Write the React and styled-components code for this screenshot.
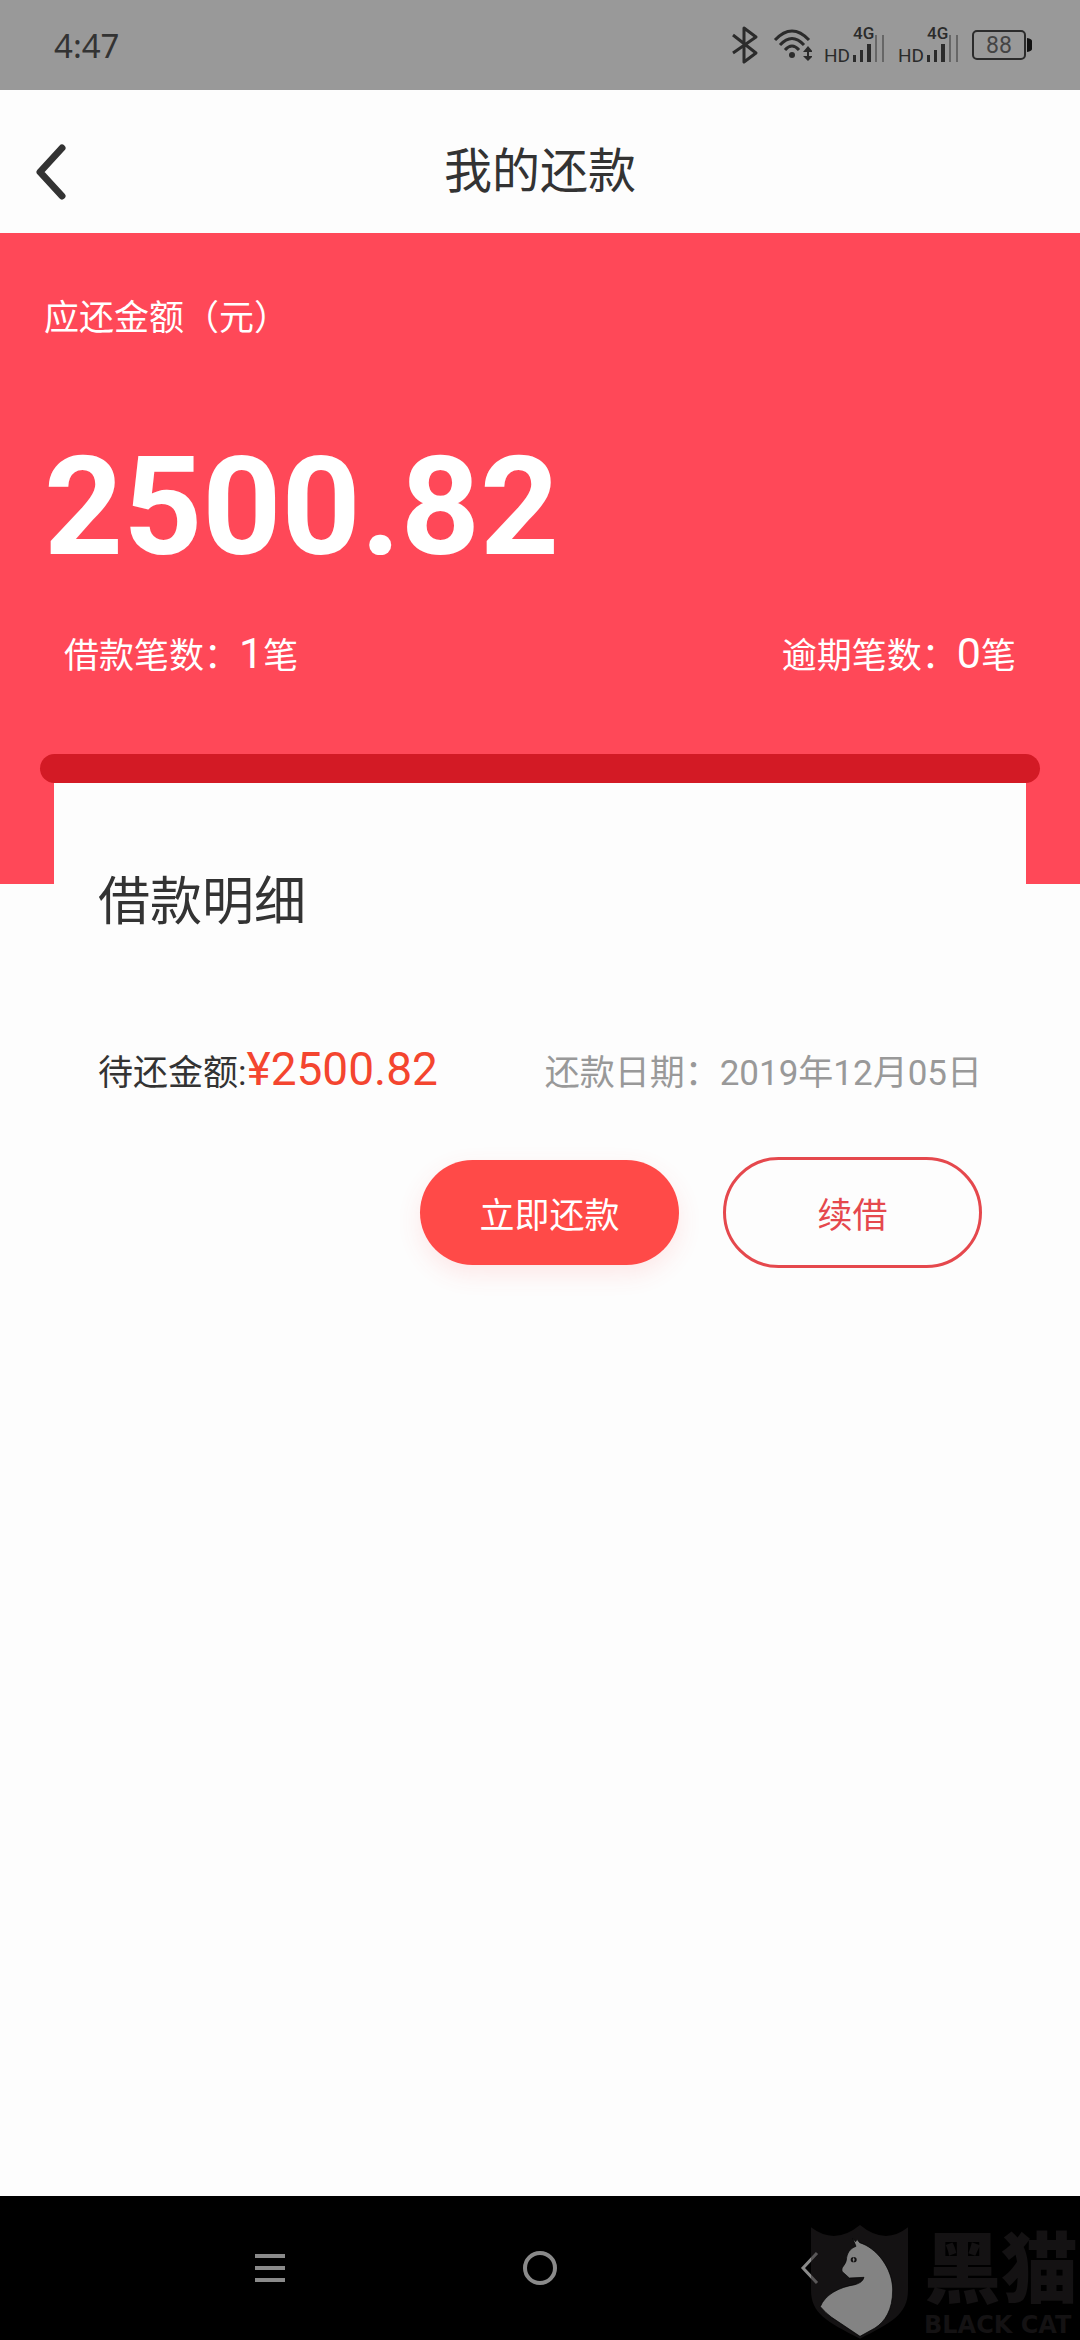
import React from "react";
import styled, { createGlobalStyle } from "styled-components";

const GlobalStyle = createGlobalStyle`
  * {
    box-sizing: border-box;
  }
  body {
    margin: 0;
    background: #fdfdfd;
    color: #333;
    font-family: Roboto, "Noto Sans CJK SC", sans-serif;
    font-size: 35px;
  }
  h1, h2, p {
    margin: 0;
    font-weight: 400;
  }
  button {
    font-family: inherit;
    cursor: pointer;
  }
`;

const Page = styled.div`
  min-height: 100vh;
  display: flex;
  flex-direction: column;
`;

const StatusBar = styled.div`
  height: 90px;
  padding: 0 48px 0 54px;
  display: flex;
  align-items: center;
  justify-content: space-between;
  background: #999;
  color: #333;
  font-family: "Noto Sans", sans-serif;
  font-size: 33px;
`;

const StatusIcons = styled.div`
  display: flex;
  align-items: center;
  gap: 12px;
  svg {
    display: block;
  }
`;

const Header = styled.header`
  height: 143px;
  padding-top: 21px;
  display: grid;
  grid-template-columns: 100px 1fr 100px;
  align-items: center;
`;

const BackButton = styled.button`
  height: 100px;
  padding: 0 0 0 34px;
  border: none;
  background: none;
  svg {
    display: block;
  }
`;

const Title = styled.h1`
  font-size: 48px;
  line-height: 60px;
  text-align: center;
`;

const Main = styled.main`
  flex: 1;
`;

const Hero = styled.section`
  padding: 66px 44px 205px;
  background: #ff4858;
  color: #fff;
`;

const HeroLabel = styled.p`
  line-height: 40px;
`;

const Total = styled.p`
  margin-top: 84px;
  font-size: 138px;
  line-height: 168px;
  font-weight: 700;
`;

const Counts = styled.div`
  height: 48px;
  margin-top: 40px;
  padding: 0 20px;
  display: flex;
  justify-content: space-between;
  line-height: 44px;
`;

const Num = styled.span`
  font-size: 43px;
`;

const Panel = styled.section`
  margin: -130px 40px 0;
`;

const Slot = styled.div`
  height: 29px;
  border-radius: 15px;
  background: #d31a25;
`;

const Card = styled.div`
  margin: 0 14px;
  padding: 90px 44px 60px;
  background: #fdfdfd;
`;

const CardTitle = styled.h2`
  font-size: 52px;
  line-height: 60px;
`;

const DetailRow = styled.div`
  height: 60px;
  margin-top: 106px;
  display: flex;
  align-items: baseline;
  justify-content: space-between;
  line-height: 60px;
`;

const Due = styled.p`
  span {
    color: #f4452f;
    font-size: 46px;
  }
`;

const DueDate = styled.p`
  color: #999;
`;

const Actions = styled.div`
  margin-top: 58px;
  display: flex;
  align-items: center;
  justify-content: flex-end;
  gap: 44px;
`;

const PillButton = styled.button`
  width: 259px;
  height: ${(props) => (props.$outline ? "111px" : "105px")};
  padding: 0;
  border: ${(props) => (props.$outline ? "3px solid #e5484d" : "none")};
  border-radius: 56px;
  background: ${(props) => (props.$outline ? "transparent" : "#ff4a48")};
  box-shadow: ${(props) =>
    props.$outline ? "none" : "0 9px 24px rgba(255, 74, 72, 0.12)"};
  color: ${(props) => (props.$outline ? "#e5484d" : "#fff")};
  font-size: 35px;
`;

const NavBar = styled.nav`
  position: relative;
  height: 144px;
  padding: 0 12.5%;
  display: grid;
  grid-template-columns: repeat(3, 1fr);
  background: #000;
`;

const NavButton = styled.button`
  display: flex;
  align-items: center;
  justify-content: center;
  padding: 0;
  border: none;
  background: none;
`;

// brand mark lies over the navigation bar
const Watermark = styled.div`
  position: absolute;
  right: 0;
  bottom: 0;
  display: flex;
  align-items: flex-end;
  gap: 14px;
  color: #141213;
  pointer-events: none;
  svg {
    display: block;
  }
`;

const Brand = styled.div`
  width: 156px;
  white-space: nowrap;
`;

const BrandName = styled.div`
  margin-bottom: 4px;
  font-family: "Noto Sans CJK SC", sans-serif;
  font-size: 77px;
  font-weight: 900;
  line-height: 84px;
`;

const BrandLatin = styled.div`
  font-family: "DejaVu Sans", sans-serif;
  font-size: 24px;
  font-weight: 700;
  line-height: 30px;
`;

const Bluetooth = () => (
  <svg width="30" height="40" viewBox="0 0 30 40" fill="none">
    <path
      d="M2 10l23 18-12 9V3l12 9L2 28"
      stroke="#2b2b2b"
      strokeWidth="3"
      strokeLinejoin="round"
    />
  </svg>
);

const Wifi = () => (
  <svg width="39" height="34" viewBox="0 0 39 34" fill="none">
    <g stroke="#2b2b2b" strokeWidth="3">
      <path d="M2 12Q19-6 36 12" />
      <path d="M7 17Q19 4 31 17" />
      <path d="M12 22Q19 14 26 22" />
      <path d="M35 22v9" strokeWidth="2" />
    </g>
    <circle cx="19" cy="27" r="3" fill="#2b2b2b" />
    <path d="M30 24l5-6 5 6zM30 28l5 5 5-5z" fill="#2b2b2b" />
  </svg>
);

const Signal = () => (
  <svg width="62" height="50" viewBox="0 -6 62 50">
    <g fill="#2b2b2b" fontFamily="Roboto, sans-serif">
      <text x="0" y="36" fontSize="19">
        HD
      </text>
      <text x="29" y="13" fontSize="17" fontWeight="500">
        4G
      </text>
      <path d="M29 29h3v7h-3zM36 24h3v12h-3zM43 18h4v18h-4z" />
    </g>
    <path d="M51 9h2v27h-2zM58 9h2v27h-2z" fill="#666" />
  </svg>
);

const Battery = () => (
  <svg width="60" height="32" viewBox="0 0 60 32">
    <rect x="1" y="2" width="52" height="28" rx="4" fill="none" stroke="#2b2b2b" strokeWidth="2" />
    <path d="M55 9q5 1 5 3v8q0 2-5 3z" fill="#111" />
    <text
      x="27"
      y="24"
      fontFamily="Roboto, sans-serif"
      fontSize="23"
      textAnchor="middle"
      fill="#444"
    >
      88
    </text>
  </svg>
);

const CatShield = () => (
  <svg width="100" height="117" viewBox="150 129 300 351">
    <path
      d="M153 142Q225 197 300 135Q375 197 444 142V330C444 405 390 430 300 476C200 425 153 400 153 330Z"
      fill="rgba(40, 36, 38, 0.5)"
    />
    <path
      d="M278 175L287 185L291 178L299 188C350 204 398 265 398 330C398 390 375 425 345 444L300 469L215 412Q198 400 181 380C195 345 235 322 285 314Q308 308 312 292L268 294L247 275C241 262 257 256 259 240C261 218 270 206 288 199Z"
      fill="#838383"
      stroke="#000"
      strokeWidth="2"
    />
    <ellipse cx="281" cy="239" rx="9" ry="8" fill="#141213" />
    <path d="M281 231l3 8-3 8-3-8z" fill="#838383" />
  </svg>
);

const App = () => {
  return (
    <Page>
      <GlobalStyle />
      <StatusBar>
        <span>4:47</span>
        <StatusIcons>
          <Bluetooth />
          <Wifi />
          <Signal />
          <Signal />
          <Battery />
        </StatusIcons>
      </StatusBar>
      <Header>
        <BackButton aria-label="返回">
          <svg width="34" height="56" viewBox="0 0 34 56" fill="none">
            <path
              d="M28 4L6 28l22 24"
              stroke="#333"
              strokeWidth="7"
              strokeLinecap="round"
              strokeLinejoin="round"
            />
          </svg>
        </BackButton>
        <Title>我的还款</Title>
      </Header>
      <Main>
        <Hero>
          <HeroLabel>应还金额（元）</HeroLabel>
          <Total>2500.82</Total>
          <Counts>
            <p>
              借款笔数：<Num>1</Num>笔
            </p>
            <p>
              逾期笔数：<Num>0</Num>笔
            </p>
          </Counts>
        </Hero>
        <Panel>
          <Slot />
          <Card>
            <CardTitle>借款明细</CardTitle>
            <DetailRow>
              <Due>
                待还金额:<span>¥2500.82</span>
              </Due>
              <DueDate>还款日期：2019年12月05日</DueDate>
            </DetailRow>
            <Actions>
              <PillButton>立即还款</PillButton>
              <PillButton $outline>续借</PillButton>
            </Actions>
          </Card>
        </Panel>
      </Main>
      <NavBar>
        <NavButton aria-label="菜单">
          <svg width="30" height="30" viewBox="0 0 30 30">
            <path d="M0 1h30v4H0zM0 13h30v4H0zM0 25h30v4H0z" fill="#8a8a8a" />
          </svg>
        </NavButton>
        <NavButton aria-label="主页">
          <svg width="34" height="34" viewBox="0 0 34 34">
            <circle cx="17" cy="17" r="15" fill="none" stroke="#8a8a8a" strokeWidth="4" />
          </svg>
        </NavButton>
        <NavButton aria-label="返回上一页">
          <svg width="20" height="34" viewBox="0 0 20 34">
            <path d="M17 2L3 17l14 15" fill="none" stroke="#8a8a8a" strokeWidth="3" />
          </svg>
        </NavButton>
        <Watermark>
          <CatShield />
          <Brand>
            <BrandName>黑猫</BrandName>
            <BrandLatin>BLACK CAT</BrandLatin>
          </Brand>
        </Watermark>
      </NavBar>
    </Page>
  );
};

export default App;
